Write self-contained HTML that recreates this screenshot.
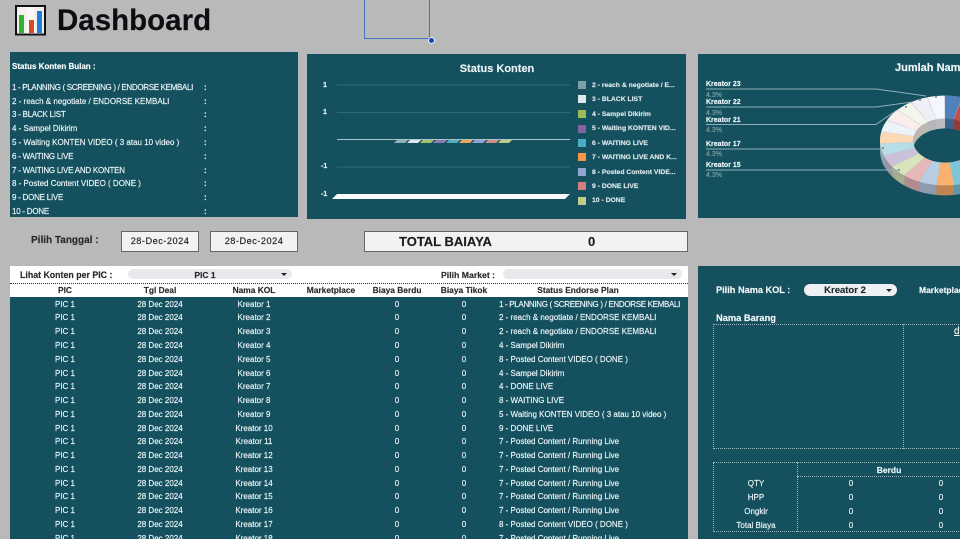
<!DOCTYPE html>
<html lang="id">
<head>
<meta charset="utf-8">
<title>Dashboard</title>
<style>
html{margin:0;padding:0;width:960px;height:539px;overflow:hidden;background:#b9b9b9}
body{margin:0;padding:0;width:960px;height:539px;overflow:hidden;background:#b9b9b9;position:relative;font-family:"Liberation Sans",sans-serif;color:#eef7f9;font-size:8px;-webkit-text-stroke:.15px;filter:blur(.3px)}
.a{position:absolute;white-space:nowrap;line-height:12px}
.c{transform:translateX(-50%)}
.p{position:absolute;background:#14505e;overflow:hidden}
.d{color:#2a2a2a;font-weight:bold}
.box{position:absolute;background:#f2f2f2;border:1px solid #666;box-sizing:border-box;color:#222;text-align:center}
.pill{position:absolute;border-radius:6px;background:#e8e9ec}
.arr{position:absolute;width:0;height:0;border-left:3.5px solid transparent;border-right:3.5px solid transparent;border-top:3.5px solid #222}
.r{position:relative;height:13.77px}
.r span{position:absolute;top:1.7px;line-height:12px;white-space:nowrap;transform:translateX(-50%)}
.r span:nth-child(1){left:55px}
.r span:nth-child(2){left:150px}
.r span:nth-child(3){left:244px}
.r span:nth-child(4){left:387px}
.r span:nth-child(5){left:454px}
.r span:nth-child(6){left:489px;transform:none}
.n{letter-spacing:-.24px}
.n1{letter-spacing:-.32px}
.dot{position:absolute;border:1px dotted #9db8be;box-sizing:border-box}
.lg{position:absolute;left:271px;width:8px;height:8px}
.lt{position:absolute;left:285px;font-size:6.8px;font-weight:bold;color:#dbe7ea;white-space:nowrap;line-height:10px}
.s circle{stroke-dasharray:var(--d,1 22)}
</style>
</head>
<body>

<svg class="a" style="left:15px;top:5px" width="32" height="31" viewBox="0 0 32 31">
<rect x="1" y="1" width="29" height="28.5" fill="#f3efec" stroke="#111" stroke-width="2"/>
<rect x="11.5" y="2" width="8" height="26.5" fill="#fbf8f6"/>
<rect x="4" y="10" width="5" height="18" fill="#2eb52e"/>
<rect x="14" y="15" width="5" height="13" fill="#d8492a"/>
<rect x="22" y="6" width="5" height="22" fill="#1f7fd6"/>
</svg>
<div class="a" style="left:57px;top:3px;font-size:29.500px;line-height:36px;font-weight:bold;color:#0d0d12">Dashboard</div>

<div class="a" style="left:364px;top:-2px;width:66px;height:41px;border:1px solid #4472c4;box-sizing:border-box"></div>
<div class="a" style="left:427.500px;top:36.500px;width:5px;height:5px;background:#1446b4;border:1px solid #e8eefc;border-radius:50%"></div>

<!-- Status panel -->
<div class="p" style="left:10px;top:52px;width:288px;height:165px">
<div class="a" style="left:2px;top:8.500px;font-weight:bold;color:#fff">Status Konten Bulan :</div>
<div class="a n1" style="left:2px;top:29.500px">1 - PLANNING ( SCREENING ) / ENDORSE KEMBALI</div>
<div class="a" style="left:2px;top:43.500px">2 - reach &amp; negotiate / ENDORSE KEMBALI</div>
<div class="a n" style="left:2px;top:57px">3 - BLACK LIST</div>
<div class="a" style="left:2px;top:71px">4 - Sampel Dikirim</div>
<div class="a" style="left:2px;top:84.500px">5 - Waiting KONTEN VIDEO ( 3 atau 10 video )</div>
<div class="a n" style="left:2px;top:98.500px">6 - WAITING LIVE</div>
<div class="a n" style="left:2px;top:112.500px">7 - WAITING LIVE AND KONTEN</div>
<div class="a" style="left:2px;top:126px">8 - Posted Content VIDEO ( DONE )</div>
<div class="a n" style="left:2px;top:140px">9 - DONE LIVE</div>
<div class="a n" style="left:2px;top:154px">10 - DONE</div>
<div class="a" style="left:194px;top:29.500px;font-weight:bold">:</div>
<div class="a" style="left:194px;top:43.500px;font-weight:bold">:</div>
<div class="a" style="left:194px;top:57px;font-weight:bold">:</div>
<div class="a" style="left:194px;top:71px;font-weight:bold">:</div>
<div class="a" style="left:194px;top:84.500px;font-weight:bold">:</div>
<div class="a" style="left:194px;top:98.500px;font-weight:bold">:</div>
<div class="a" style="left:194px;top:112.500px;font-weight:bold">:</div>
<div class="a" style="left:194px;top:126px;font-weight:bold">:</div>
<div class="a" style="left:194px;top:140px;font-weight:bold">:</div>
<div class="a" style="left:194px;top:154px;font-weight:bold">:</div>
</div>

<!-- Status Konten chart -->
<div class="p" style="left:307px;top:54px;width:379px;height:165px">
<div class="a c" style="left:190px;top:9px;font-size:11px;font-weight:bold;color:#e9f2f4">Status Konten</div>
<div class="a" style="left:16px;top:26px;font-size:7px;font-weight:bold">1</div>
<div class="a" style="left:16px;top:53px;font-size:7px;font-weight:bold">1</div>
<div class="a" style="left:14px;top:107px;font-size:7px;font-weight:bold">-1</div>
<div class="a" style="left:14px;top:135px;font-size:7px;font-weight:bold">-1</div>
<svg class="a" style="left:0;top:0" width="379" height="165" viewBox="0 0 379 165">
<g stroke="#2f6a77" stroke-width="1"><line x1="30" y1="31" x2="263" y2="31"/><line x1="30" y1="58.500" x2="263" y2="58.500"/><line x1="30" y1="113" x2="263" y2="113"/></g>
<line x1="30" y1="85.500" x2="263" y2="85.500" stroke="#a9c4ca" stroke-width="1"/>
<polygon points="87,89 90,86 101,86 98,89" fill="#8fb0b8"/>
<polygon points="100,89 103,86 114,86 111,89" fill="#dce8ec"/>
<polygon points="113,89 116,86 127,86 124,89" fill="#a4c26c"/>
<polygon points="126,89 129,86 140,86 137,89" fill="#8f78b4"/>
<polygon points="139,89 142,86 153,86 150,89" fill="#55aebf"/>
<polygon points="152,89 155,86 166,86 163,89" fill="#eea459"/>
<polygon points="165,89 168,86 179,86 176,89" fill="#8fa6d4"/>
<polygon points="178,89 181,86 192,86 189,89" fill="#cf8f8f"/>
<polygon points="191,89 194,86 205,86 202,89" fill="#bdcf85"/>
<polygon points="25,145 30,140 263,140 258,145" fill="#f8f8f8"/>
</svg>
<div class="lg" style="top:27px;background:#7f9fa8"></div><div class="lt" style="top:26.500px">2 - reach &amp; negotiate / E...</div>
<div class="lg" style="top:41px;background:#dce8ec"></div><div class="lt" style="top:40.500px">3 - BLACK LIST</div>
<div class="lg" style="top:56px;background:#9bbb59"></div><div class="lt" style="top:55.500px">4 - Sampel Dikirim</div>
<div class="lg" style="top:70.500px;background:#8064a2"></div><div class="lt" style="top:70px">5 - Waiting KONTEN VID...</div>
<div class="lg" style="top:85px;background:#4bacc6"></div><div class="lt" style="top:84.500px">6 - WAITING LIVE</div>
<div class="lg" style="top:99px;background:#f79646"></div><div class="lt" style="top:98.500px">7 - WAITING LIVE AND K...</div>
<div class="lg" style="top:114px;background:#8fa6d4"></div><div class="lt" style="top:113.500px">8 - Posted Content VIDE...</div>
<div class="lg" style="top:128px;background:#d0807e"></div><div class="lt" style="top:127.500px">9 - DONE LIVE</div>
<div class="lg" style="top:142.500px;background:#bdcf85"></div><div class="lt" style="top:142px">10 - DONE</div>
</div>

<!-- Donut panel -->
<div class="p" style="left:698px;top:54px;width:262px;height:164px">
<svg class="a" style="left:0;top:0" width="262" height="164" viewBox="698 54 262 164">
<defs>
<g id="ring" class="s" fill="none" stroke-width="33" transform="translate(945,140.500) scale(1,.69) rotate(-90)">
<circle r="48.500" pathLength="23" stroke-dashoffset="0" stroke="#4f81bd"/>
<circle r="48.500" pathLength="23" stroke-dashoffset="-1" stroke="#c0504d"/>
<circle r="48.500" pathLength="23" stroke-dashoffset="-2" stroke="#9bbb59"/>
<circle r="48.500" pathLength="23" stroke-dashoffset="-3" stroke="#8064a2"/>
<circle r="48.500" pathLength="23" stroke-dashoffset="-4" stroke="#4bacc6"/>
<circle r="48.500" pathLength="23" stroke-dashoffset="-5" stroke="#f79646"/>
<circle r="48.500" pathLength="23" stroke-dashoffset="-6" stroke="#95b3d7"/>
<circle r="48.500" pathLength="23" stroke-dashoffset="-7" stroke="#d99694"/>
<circle r="48.500" pathLength="23" stroke-dashoffset="-8" stroke="#c3d69b"/>
<circle r="48.500" pathLength="23" stroke-dashoffset="-9" stroke="#b3a2c7"/>
<circle r="48.500" pathLength="23" stroke-dashoffset="-10" stroke="#7fc5d8"/>
<circle r="48.500" pathLength="23" stroke-dashoffset="-11" stroke="#fbb06e"/>
<circle r="48.500" pathLength="23" stroke-dashoffset="-12" stroke="#b9cde5"/>
<circle r="48.500" pathLength="23" stroke-dashoffset="-13" stroke="#e6b9b8"/>
<circle r="48.500" pathLength="23" stroke-dashoffset="-14" stroke="#d8e4bc"/>
<circle r="48.500" pathLength="23" stroke-dashoffset="-15" stroke="#ccc1da"/>
<circle r="48.500" pathLength="23" stroke-dashoffset="-16" stroke="#b7dde8"/>
<circle r="48.500" pathLength="23" stroke-dashoffset="-17" stroke="#fdd9b5"/>
<circle r="48.500" pathLength="23" stroke-dashoffset="-18" stroke="#eef3fa"/>
<circle r="48.500" pathLength="23" stroke-dashoffset="-19" stroke="#faeeec"/>
<circle r="48.500" pathLength="23" stroke-dashoffset="-20" stroke="#f3f6ea"/>
<circle r="48.500" pathLength="23" stroke-dashoffset="-21" stroke="#f0eef6"/>
<circle r="48.500" pathLength="23" stroke-dashoffset="-22" stroke="#f4f8fc"/>
</g>
</defs>
<g style="filter:brightness(.76)">
<use href="#ring" y="10"/><use href="#ring" y="9"/><use href="#ring" y="8"/><use href="#ring" y="7"/><use href="#ring" y="6"/><use href="#ring" y="5"/><use href="#ring" y="4"/><use href="#ring" y="3"/><use href="#ring" y="2"/><use href="#ring" y="1"/>
</g>
<circle r="48.500" fill="none" stroke="#b8bdc0" stroke-width="33" transform="translate(945,140.500) scale(1,.69)"/>
<use href="#ring" style="--d:.97 22.03"/>
<g fill="none" stroke="#8fb0b8" stroke-width="1">
<polyline points="706,89 876,89 926,96"/>
<polyline points="706,107 876,107 912,102"/>
<polyline points="706,124.500 876,124.500 897,110"/>
<polyline points="706,149 883,149"/>
<polyline points="706,170 899,170"/>
</g>
<g fill="#6d8288"><circle cx="936" cy="97" r="1"/><circle cx="920" cy="100" r="1"/><circle cx="906" cy="107" r="1"/><circle cx="883" cy="148" r="1"/><circle cx="899" cy="170" r="1"/></g>
</svg>
<div class="a" style="left:8px;top:25px;font-size:7px;font-weight:bold">Kreator 23</div><div class="a" style="left:8px;top:36px;font-size:7px;color:#7fa0a8">4.3%</div>
<div class="a" style="left:8px;top:43px;font-size:7px;font-weight:bold">Kreator 22</div><div class="a" style="left:8px;top:54px;font-size:7px;color:#7fa0a8">4.3%</div>
<div class="a" style="left:8px;top:61px;font-size:7px;font-weight:bold">Kreator 21</div><div class="a" style="left:8px;top:71px;font-size:7px;color:#7fa0a8">4.3%</div>
<div class="a" style="left:8px;top:84.500px;font-size:7px;font-weight:bold">Kreator 17</div><div class="a" style="left:8px;top:94.500px;font-size:7px;color:#7fa0a8">4.3%</div>
<div class="a" style="left:8px;top:105.500px;font-size:7px;font-weight:bold">Kreator 15</div><div class="a" style="left:8px;top:115.500px;font-size:7px;color:#7fa0a8">4.3%</div>
<div class="a" style="left:197px;top:8px;font-size:11px;font-weight:bold;color:#f2f7f8;line-height:13px">Jumlah Nama KOL</div>
</div>

<!-- Date / total -->
<div class="a d" style="left:31px;top:235px;font-size:10px">Pilih Tanggal :</div>
<div class="box" style="left:121px;top:231px;width:78px;height:21px;font-size:9.200px;line-height:19px;letter-spacing:.5px">28-Dec-2024</div>
<div class="box" style="left:210px;top:231px;width:88px;height:21px;font-size:9.200px;line-height:19px;letter-spacing:.5px">28-Dec-2024</div>
<div class="box" style="left:364px;top:231px;width:324px;height:21px"></div>
<div class="a" style="left:399px;top:235px;font-size:13px;line-height:14px;font-weight:bold;color:#1d1d1d">TOTAL BAIAYA</div>
<div class="a" style="left:588px;top:235px;font-size:13px;line-height:14px;font-weight:bold;color:#1d1d1d">0</div>

<!-- Table head -->
<div class="a" style="left:10px;top:266px;width:678px;height:31px;background:#fff"></div>
<div class="a" style="left:10px;top:283px;width:678px;height:0;border-top:1px dotted #333"></div>
<div class="a d" style="left:20px;top:268.500px;font-size:8.800px">Lihat Konten per PIC :</div>
<div class="pill" style="left:128px;top:269px;width:164px;height:10px"></div>
<div class="a d c" style="left:205px;top:268.500px;font-size:8.500px">PIC 1</div>
<div class="arr" style="left:281px;top:273px"></div>
<div class="a d" style="left:441px;top:268.500px;font-size:8.700px">Pilih Market :</div>
<div class="pill" style="left:503px;top:269px;width:179px;height:10px"></div>
<div class="arr" style="left:671px;top:273px"></div>
<div class="a d c" style="left:65px;top:284px;font-size:8.400px">PIC</div>
<div class="a d c" style="left:160px;top:284px;font-size:8.400px">Tgl Deal</div>
<div class="a d c" style="left:254px;top:284px;font-size:8.400px">Nama KOL</div>
<div class="a d c" style="left:331px;top:284px;font-size:8.400px">Marketplace</div>
<div class="a d c" style="left:397px;top:284px;font-size:8.400px">Biaya Berdu</div>
<div class="a d c" style="left:464px;top:284px;font-size:8.400px">Biaya Tikok</div>
<div class="a d c" style="left:578px;top:284px;font-size:8.400px">Status Endorse Plan</div>

<!-- Table -->
<div class="p" style="left:10px;top:297px;width:678px;height:242px">
<div class="r"><span>PIC 1</span><span>28 Dec 2024</span><span>Kreator 1</span><span>0</span><span>0</span><span class="n1">1 - PLANNING ( SCREENING ) / ENDORSE KEMBALI</span></div>
<div class="r"><span>PIC 1</span><span>28 Dec 2024</span><span>Kreator 2</span><span>0</span><span>0</span><span>2 - reach &amp; negotiate / ENDORSE KEMBALI</span></div>
<div class="r"><span>PIC 1</span><span>28 Dec 2024</span><span>Kreator 3</span><span>0</span><span>0</span><span>2 - reach &amp; negotiate / ENDORSE KEMBALI</span></div>
<div class="r"><span>PIC 1</span><span>28 Dec 2024</span><span>Kreator 4</span><span>0</span><span>0</span><span>4 - Sampel Dikirim</span></div>
<div class="r"><span>PIC 1</span><span>28 Dec 2024</span><span>Kreator 5</span><span>0</span><span>0</span><span>8 - Posted Content VIDEO ( DONE )</span></div>
<div class="r"><span>PIC 1</span><span>28 Dec 2024</span><span>Kreator 6</span><span>0</span><span>0</span><span>4 - Sampel Dikirim</span></div>
<div class="r"><span>PIC 1</span><span>28 Dec 2024</span><span>Kreator 7</span><span>0</span><span>0</span><span>4 - DONE LIVE</span></div>
<div class="r"><span>PIC 1</span><span>28 Dec 2024</span><span>Kreator 8</span><span>0</span><span>0</span><span>8 - WAITING LIVE</span></div>
<div class="r"><span>PIC 1</span><span>28 Dec 2024</span><span>Kreator 9</span><span>0</span><span>0</span><span>5 - Waiting KONTEN VIDEO ( 3 atau 10 video )</span></div>
<div class="r"><span>PIC 1</span><span>28 Dec 2024</span><span>Kreator 10</span><span>0</span><span>0</span><span>9 - DONE LIVE</span></div>
<div class="r"><span>PIC 1</span><span>28 Dec 2024</span><span>Kreator 11</span><span>0</span><span>0</span><span>7 - Posted Content / Running Live</span></div>
<div class="r"><span>PIC 1</span><span>28 Dec 2024</span><span>Kreator 12</span><span>0</span><span>0</span><span>7 - Posted Content / Running Live</span></div>
<div class="r"><span>PIC 1</span><span>28 Dec 2024</span><span>Kreator 13</span><span>0</span><span>0</span><span>7 - Posted Content / Running Live</span></div>
<div class="r"><span>PIC 1</span><span>28 Dec 2024</span><span>Kreator 14</span><span>0</span><span>0</span><span>7 - Posted Content / Running Live</span></div>
<div class="r"><span>PIC 1</span><span>28 Dec 2024</span><span>Kreator 15</span><span>0</span><span>0</span><span>7 - Posted Content / Running Live</span></div>
<div class="r"><span>PIC 1</span><span>28 Dec 2024</span><span>Kreator 16</span><span>0</span><span>0</span><span>7 - Posted Content / Running Live</span></div>
<div class="r"><span>PIC 1</span><span>28 Dec 2024</span><span>Kreator 17</span><span>0</span><span>0</span><span>8 - Posted Content VIDEO ( DONE )</span></div>
<div class="r"><span>PIC 1</span><span>28 Dec 2024</span><span>Kreator 18</span><span>0</span><span>0</span><span>7 - Posted Content / Running Live</span></div>
</div>

<!-- Right panel -->
<div class="p" style="left:698px;top:266px;width:262px;height:273px">
<div class="a" style="left:18px;top:18px;font-size:9.200px;font-weight:bold;color:#f4f8f9">Pilih Nama KOL :</div>
<div class="pill" style="left:106px;top:18px;width:93px;height:12px;background:#eef0f3"></div>
<div class="a c" style="left:147px;top:18.500px;font-size:9.500px;font-weight:bold;color:#1d2b30">Kreator 2</div>
<div class="arr" style="left:188px;top:23px"></div>
<div class="a" style="left:221px;top:18px;font-size:8.500px;font-weight:bold;color:#f4f8f9">Marketplace</div>
<div class="a" style="left:18px;top:46px;font-size:9.300px;font-weight:bold;color:#f4f8f9">Nama Barang</div>
<div class="dot" style="left:15px;top:58px;width:260px;height:125px"></div>
<div class="dot" style="left:205px;top:58px;width:0;height:125px;border-width:0 0 0 1px"></div>
<div class="a" style="left:256px;top:60px;font-size:10px;text-decoration:underline;color:#f4f8f9">d</div>
<div class="dot" style="left:15px;top:196px;width:260px;height:70px"></div>
<div class="dot" style="left:99px;top:196px;width:0;height:70px;border-width:0 0 0 1px"></div>
<div class="dot" style="left:99px;top:210px;width:170px;height:0;border-width:1px 0 0 0"></div>
<div class="a c" style="left:191px;top:198px;font-size:8.500px;font-weight:bold">Berdu</div>
<div class="a c" style="left:58px;top:212px">QTY</div>
<div class="a c" style="left:58px;top:226px">HPP</div>
<div class="a c" style="left:58px;top:240px">Ongkir</div>
<div class="a c" style="left:58px;top:253.500px">Total Biaya</div>
<div class="a c" style="left:153px;top:212px">0</div><div class="a c" style="left:243px;top:212px">0</div>
<div class="a c" style="left:153px;top:226px">0</div><div class="a c" style="left:243px;top:226px">0</div>
<div class="a c" style="left:153px;top:240px">0</div><div class="a c" style="left:243px;top:240px">0</div>
<div class="a c" style="left:153px;top:253.500px">0</div><div class="a c" style="left:243px;top:253.500px">0</div>
</div>

</body>
</html>
